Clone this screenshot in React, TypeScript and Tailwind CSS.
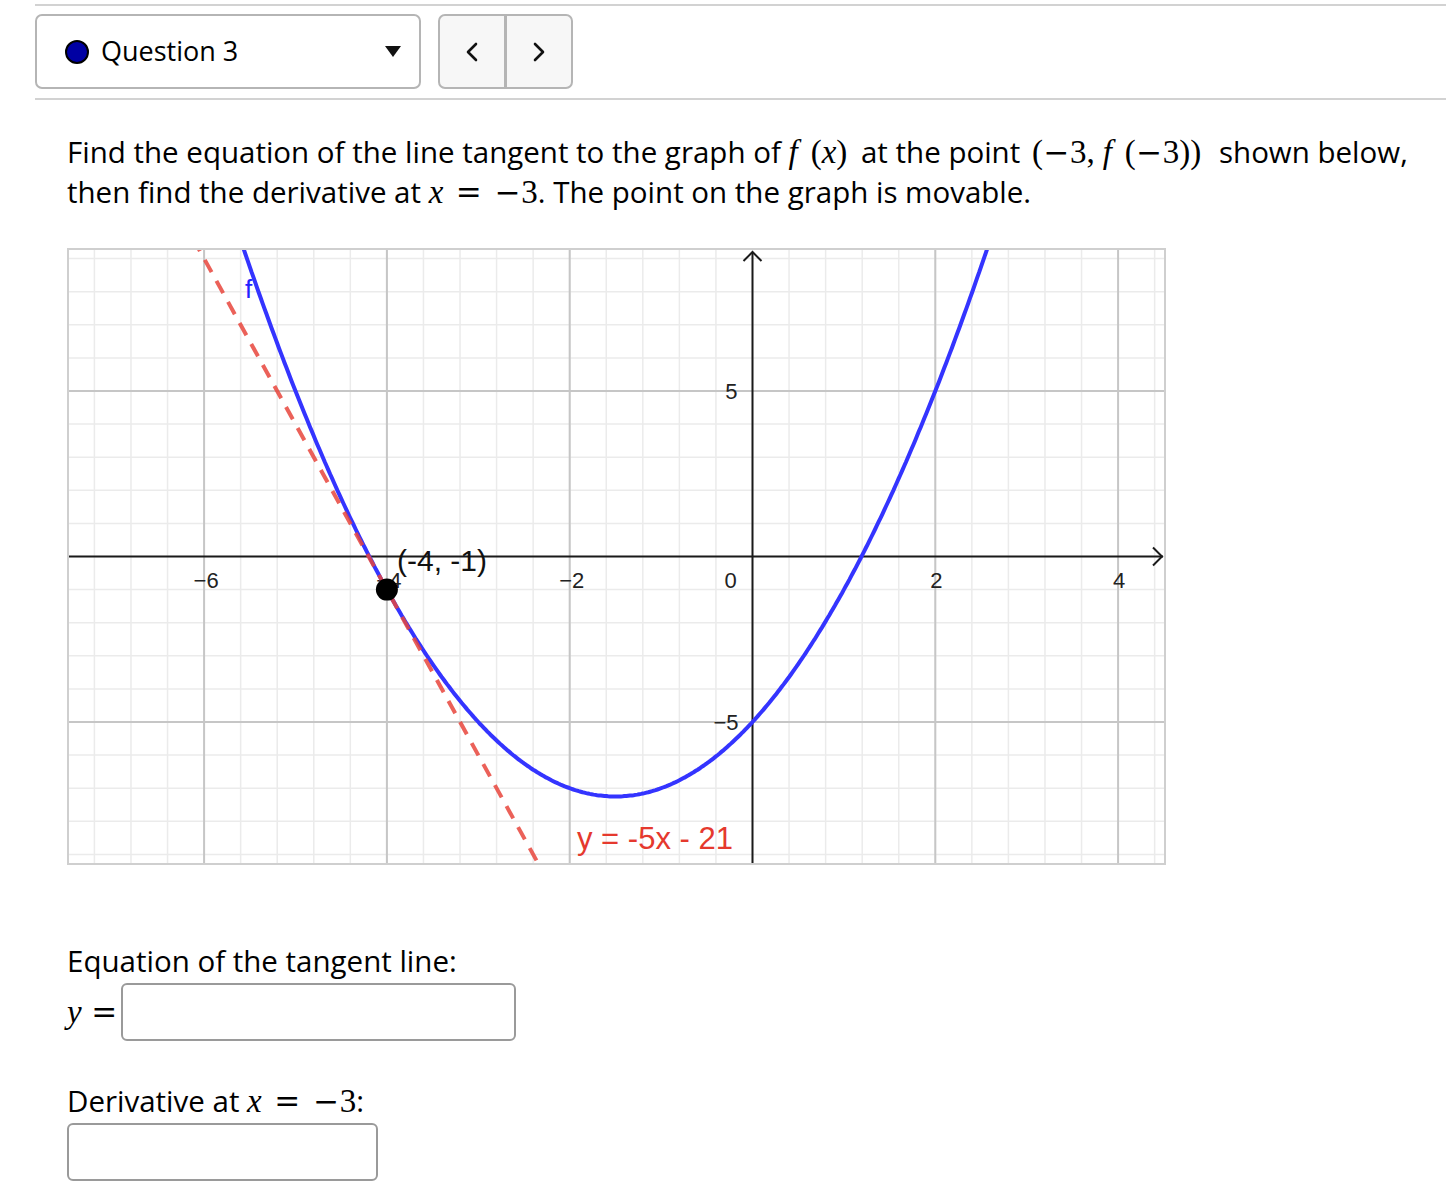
import type { ReactNode } from 'react'

// graph geometry (svg coords, box is 1099 x 617)
const W = 1099
const H = 617
const OX = 685.5
const OY = 308.5
const SX = 91.4
const SY = 33.1
const X = (x: number) => OX + x * SX
const Y = (y: number) => OY - y * SY

const f = (x: number) => x * x + 3 * x - 5
const tangent = (x: number) => -5 * x - 21

function curvePath(fn: (x: number) => number, from: number, to: number, step = 0.02) {
  const pts: string[] = []
  for (let x = from; x <= to + 1e-9; x += step) {
    pts.push(`${X(x).toFixed(1)},${Y(fn(x)).toFixed(1)}`)
  }
  return 'M' + pts.join(' L')
}

// math bits, roughly MathJax sized
function V({ children, className = '' }: { children: ReactNode; className?: string }) {
  return <span className={`font-['Liberation_Serif',serif] text-[33px] italic ${className}`}>{children}</span>
}

function R({ children, className = '' }: { children: ReactNode; className?: string }) {
  return <span className={`font-['Liberation_Serif',serif] text-[33px] ${className}`}>{children}</span>
}

function Eq({ className = 'mx-[12px]' }: { className?: string }) {
  return (
    <span className={`inline-block w-[27px] text-center font-['DejaVu_Serif',serif] text-[31px] ${className}`}>=</span>
  )
}

function Minus() {
  return (
    <span className="inline-block w-[27px] text-center font-['DejaVu_Serif',serif] text-[31px]">−</span>
  )
}

function Graph() {
  const minorX: number[] = []
  for (let i = -18; i <= 11; i++) minorX.push(i * 0.4)
  const minorY: number[] = []
  for (let i = -9; i <= 9; i++) minorY.push(i)
  const majorX = [-6, -4, -2, 2, 4]
  const majorY = [-5, 5]

  return (
    <svg width={W} height={H} viewBox={`0 0 ${W} ${H}`} className="block">
      <rect x={1} y={1} width={W - 2} height={H - 2} fill="#fff" stroke="#cfcfcf" strokeWidth={2} />
      <defs>
        <clipPath id="box">
          <rect x={2} y={2} width={W - 4} height={H - 4} />
        </clipPath>
      </defs>
      <g clipPath="url(#box)">
        {minorX.map((x) => (
          <line key={'mx' + x} x1={X(x)} x2={X(x)} y1={0} y2={H} stroke="#ebebeb" strokeWidth={1.5} />
        ))}
        {minorY.map((y) => (
          <line key={'my' + y} x1={0} x2={W} y1={Y(y)} y2={Y(y)} stroke="#ebebeb" strokeWidth={1.5} />
        ))}
        {majorX.map((x) => (
          <line key={'Mx' + x} x1={X(x)} x2={X(x)} y1={0} y2={H} stroke="#c6c6c6" strokeWidth={2} />
        ))}
        {majorY.map((y) => (
          <line key={'My' + y} x1={0} x2={W} y1={Y(y)} y2={Y(y)} stroke="#c6c6c6" strokeWidth={2} />
        ))}

        {/* axes */}
        <line x1={0} x2={W - 3} y1={OY} y2={OY} stroke="#1a1a1a" strokeWidth={2} />
        <polyline points={`${W - 13},${OY - 9} ${W - 4},${OY} ${W - 13},${OY + 9}`} fill="none" stroke="#1a1a1a" strokeWidth={2} />
        <line x1={OX} x2={OX} y1={H} y2={4} stroke="#1a1a1a" strokeWidth={2} />
        <polyline points={`${OX - 9},${13} ${OX},${4} ${OX + 9},${13}`} fill="none" stroke="#1a1a1a" strokeWidth={2} />

        {/* tick labels */}
        <g fontFamily="'Liberation Sans', Arial, sans-serif" fontSize={22} fill="#222">
          <text x={X(-6) + 2} y={OY + 31} textAnchor="middle">−6</text>
          <text x={X(-4) + 2} y={OY + 31} textAnchor="middle">−4</text>
          <text x={X(-2) + 2} y={OY + 31} textAnchor="middle">−2</text>
          <text x={OX - 22} y={OY + 31} textAnchor="middle">0</text>
          <text x={X(2) + 1} y={OY + 31} textAnchor="middle">2</text>
          <text x={X(4) + 1} y={OY + 31} textAnchor="middle">4</text>
          <text x={OX - 15} y={Y(5) + 8} textAnchor="end">5</text>
          <text x={OX - 14} y={Y(-5) + 8} textAnchor="end">−5</text>
        </g>

        {/* f and its tangent */}
        <path d={curvePath(f, -6, 3)} fill="none" stroke="#3434ff" strokeWidth={4} />
        <path
          d={`M${X(-6.5)},${Y(tangent(-6.5))} L${X(-2)},${Y(tangent(-2))}`}
          fill="none"
          stroke="#e8453c"
          strokeOpacity={0.85}
          strokeWidth={4}
          strokeDasharray="14 10"
        />

        <circle cx={X(-4)} cy={Y(-1)} r={11} fill="#000" />

        <text x={330} y={OY + 14} fontFamily="'Liberation Sans', Arial, sans-serif" fontSize={30} fill="#111">
          (-4, -1)
        </text>
        <text x={178} y={50} fontFamily="'Liberation Sans', Arial, sans-serif" fontSize={26} fill="#2222ff">
          f
        </text>
        <text x={510} y={601} fontFamily="'Liberation Sans', Arial, sans-serif" fontSize={31} fill="#e5392e">
          y = -5x - 21
        </text>
      </g>
    </svg>
  )
}

export default function App() {
  return (
    <div className="w-[1446px] min-h-[1200px] bg-white pt-[4px] font-['Open_Sans',sans-serif] text-black">
      {/* header */}
      <div className="ml-[35px] border-t-2 border-[#d2d2d2]" />
      <div className="ml-[35px] mt-[8px] flex gap-[17px]">
        <div className="flex h-[75px] w-[386px] items-center rounded-[7px] border-2 border-[#b5b5b5] pl-[28px] pr-[18px]">
          <span className="h-[24px] w-[24px] rounded-full border-2 border-black bg-[#0000a3]" />
          <span className="ml-[12px] text-[27px]">Question 3</span>
          <svg width="16" height="11" viewBox="0 0 16 11" className="ml-auto">
            <polygon points="0,0 16,0 8,11" fill="#111" />
          </svg>
        </div>
        <div className="flex h-[75px] w-[135px] overflow-hidden rounded-[7px] border-2 border-[#b5b5b5] bg-[#f7f7f7]">
          <div className="flex flex-1 items-center justify-center border-r-[3px] border-[#b5b5b5]">
            <svg width="12" height="20" viewBox="0 0 12 20">
              <polyline points="10,2 2,10 10,18" fill="none" stroke="#111" strokeWidth="2.6" strokeLinecap="round" strokeLinejoin="round" />
            </svg>
          </div>
          <div className="flex flex-1 items-center justify-center">
            <svg width="12" height="20" viewBox="0 0 12 20">
              <polyline points="2,2 10,10 2,18" fill="none" stroke="#111" strokeWidth="2.6" strokeLinecap="round" strokeLinejoin="round" />
            </svg>
          </div>
        </div>
      </div>
      <div className="ml-[35px] mt-[9px] border-t-2 border-[#d2d2d2]" />

      {/* question */}
      <div className="ml-[67px] mt-[32px] text-[29.5px] leading-[40px]">
        <div className="whitespace-nowrap">
          Find the equation of the line tangent to the graph of{' '}
          <V className="pr-[3px]">f</V>
          <R className="ml-[10px]">(</R>
          <V>x</V>
          <R className="mr-[6px]">)</R> at the point <R className="ml-[4px]">(</R>
          <Minus />
          <R>3,</R>
          <V className="ml-[8px] pr-[3px]">f</V>
          <R className="ml-[10px]">(</R>
          <Minus />
          <R>3))</R>
          <span className="ml-[10px]"> shown below,</span>
        </div>
        <div className="whitespace-nowrap">
          then find the derivative at <V>x</V>
          <Eq />
          <Minus />
          <R>3</R>. The point on the graph is movable.
        </div>
      </div>

      <div className="ml-[67px] mt-[36px]">
        <Graph />
      </div>

      {/* answers */}
      <div className="ml-[67px] mt-[76px] text-[29.5px] leading-[40px]">
        <div>Equation of the tangent line:</div>
        <div className="mt-[2px] flex items-center">
          <span className="w-[54px] whitespace-nowrap">
            <V>y</V>
            <Eq className="ml-[9px]" />
          </span>
          <div className="h-[58px] w-[395px] rounded-[6px] border-2 border-[#9a9a9a] bg-white" />
        </div>
        <div className="mt-[40px] whitespace-nowrap">
          Derivative at <V>x</V>
          <Eq />
          <Minus />
          <R>3</R>:
        </div>
        <div className="mt-[2px] h-[58px] w-[311px] rounded-[6px] border-2 border-[#9a9a9a] bg-white" />
      </div>
    </div>
  )
}
